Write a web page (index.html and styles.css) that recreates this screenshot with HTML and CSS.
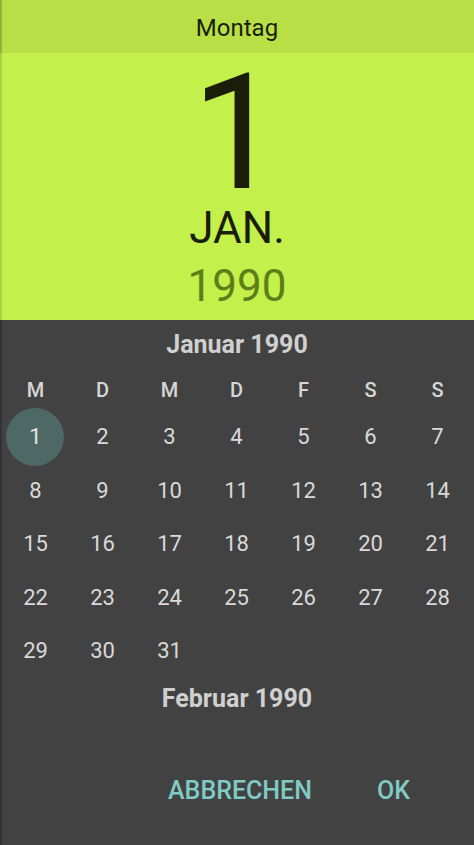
FILE: index.html
```html
<!DOCTYPE html>
<html lang="de">
<head>
<meta charset="utf-8">
<title>Datum</title>
<link rel="stylesheet" href="styles.css">
</head>
<body>
<div class="picker">
  <div class="weekday">Montag</div>
  <div class="date">
    <div class="day-big">1</div>
    <div class="month-short">JAN.</div>
    <div class="year">1990</div>
  </div>
  <div class="calendar">
    <div class="month-title">Januar 1990</div>
    <div class="week-head">
      <span>M</span><span>D</span><span>M</span><span>D</span><span>F</span><span>S</span><span>S</span>
    </div>
    <div class="days">
      <span class="selected">1</span><span>2</span><span>3</span><span>4</span><span>5</span><span>6</span><span>7</span>
      <span>8</span><span>9</span><span>10</span><span>11</span><span>12</span><span>13</span><span>14</span>
      <span>15</span><span>16</span><span>17</span><span>18</span><span>19</span><span>20</span><span>21</span>
      <span>22</span><span>23</span><span>24</span><span>25</span><span>26</span><span>27</span><span>28</span>
      <span>29</span><span>30</span><span>31</span>
    </div>
    <div class="month-title next">Februar 1990</div>
  </div>
  <div class="actions">
    <span class="btn">ABBRECHEN</span>
    <span class="btn">OK</span>
  </div>
</div>
</body>
</html>
```
FILE: styles.css
```css
html, body {
  margin: 0;
  padding: 0;
  background: #424242;
}
body {
  font-family: Roboto, "Noto Sans", sans-serif;
  width: 474px;
  height: 845px;
  overflow: hidden;
}
.picker {
  display: flex;
  flex-direction: column;
  height: 845px;
  background: #424242;
  box-shadow: inset 2px 0 0 rgba(0, 0, 0, 0.22);
}
.weekday {
  height: 53px;
  background: #b8e046;
  color: #1b2008;
  font-size: 24px;
  line-height: 56px;
  text-align: center;
  box-shadow: inset 2px 0 0 rgba(0, 0, 0, 0.2);
}
.date {
  background: #c3f04a;
  height: 267px;
  box-sizing: border-box;
  padding-top: 10px;
  text-align: center;
  box-shadow: inset 2px 0 0 rgba(0, 0, 0, 0.12);
}
.day-big {
  font-size: 162px;
  line-height: 140px;
  color: #1a1d0a;
}
.month-short {
  margin-top: 3px;
  font-size: 44px;
  line-height: 44px;
  color: #1a1d0a;
}
.year {
  margin-top: 14px;
  font-size: 44px;
  line-height: 44px;
  color: #5e7e19;
}
.calendar {
  padding-top: 10px;
}
.month-title {
  font-size: 25px;
  font-weight: 700;
  line-height: 30px;
  color: #d0d0d0;
  text-align: center;
}
.week-head {
  display: grid;
  grid-template-columns: repeat(7, 67px);
  padding-left: 2px;
  margin-top: 18px;
  font-size: 20px;
  font-weight: 500;
  line-height: 24px;
  color: #d6d6d6;
  text-align: center;
}
.days {
  display: grid;
  grid-template-columns: repeat(7, 67px);
  grid-auto-rows: 53.5px;
  padding-left: 2px;
  margin-top: 8px;
  font-size: 22px;
  color: #d9d9d9;
}
.days span {
  display: flex;
  align-items: center;
  justify-content: center;
  position: relative;
}
.days .selected::before {
  content: "";
  position: absolute;
  left: 4px;
  top: -2px;
  width: 58px;
  height: 58px;
  border-radius: 50%;
  background: #4e6865;
  z-index: -1;
}
.days .selected {
  z-index: 0;
  color: #e0e6e5;
}
.month-title.next {
  margin-top: 6px;
}
.actions {
  display: flex;
  justify-content: flex-end;
  padding-right: 32px;
  margin-top: 62px;
  gap: 1px;
}
.btn {
  padding: 0 32px;
  font-size: 25px;
  font-weight: 500;
  line-height: 30px;
  color: #80cbc4;
}
```
